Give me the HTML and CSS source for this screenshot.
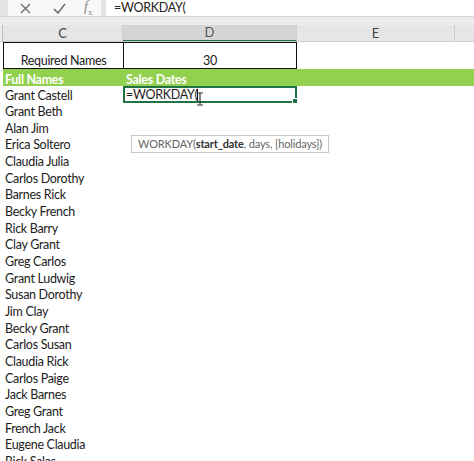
FILE: index.html
```html
<!DOCTYPE html>
<html lang="en">
<head>
  <meta charset="UTF-8" />
  <title>WORKDAY</title>
  <link rel="stylesheet" href="styles.css">
</head>
<body>
  <div class="formula-bar">
    <div class="fx-box">
      <svg class="cancel" width="11" height="11" viewBox="0 0 11 11">
        <path d="M1 1l9 9M10 1l-9 9" stroke="#6a6a6a" stroke-width="1.3" fill="none"/>
      </svg>
      <svg class="enter" width="13" height="11" viewBox="0 0 13 11">
        <path d="M1 6l4 4 7-9" stroke="#6a6a6a" stroke-width="1.5" fill="none"/>
      </svg>
      <span class="fx"><i>f</i><sub>x</sub></span>
    </div>
    <div class="formula-input">=WORKDAY(</div>
  </div>

  <div class="col-headers">
    <div class="edge"></div>
    <div class="hdr c">C</div>
    <div class="hdr d selected">D</div>
    <div class="hdr e">E</div>
    <div class="hdr f"></div>
  </div>

  <div class="sheet">
    <div class="row tall">
      <div class="cell c boxed">Required Names</div>
      <div class="cell d boxed">30</div>
    </div>
    <div class="row green">
      <div class="cell c">Full Names</div>
      <div class="cell d">Sales Dates</div>
    </div>
    <div class="row">
      <div class="cell c">Grant Castell</div>
      <div class="cell d active">=WORKDAY(<span class="caret"></span><span class="handle"></span></div>
    </div>
    <div id="names"></div>

    <div class="tooltip">WORKDAY(<b>start_date</b>, days, [holidays])</div>
    <svg class="ibeam" width="8" height="14" viewBox="0 0 8 14">
      <path d="M1 1h2.5l0.5 0.6 0.5-0.6H7M4 1.6v10.8M1 13h2.5l0.5-0.6 0.5 0.6H7" fill="none" stroke="#333" stroke-width="1.2"/>
    </svg>
  </div>

  <script>
    const names = [
      'Grant Beth', 'Alan Jim', 'Erica Soltero', 'Claudia Julia', 'Carlos Dorothy',
      'Barnes Rick', 'Becky French', 'Rick Barry', 'Clay Grant', 'Greg Carlos',
      'Grant Ludwig', 'Susan Dorothy', 'Jim Clay', 'Becky Grant', 'Carlos Susan',
      'Claudia Rick', 'Carlos Paige', 'Jack Barnes', 'Greg Grant', 'French Jack',
      'Eugene Claudia', 'Rick Salas'
    ];
    const list = document.getElementById('names');
    names.forEach(name => {
      const row = document.createElement('div');
      row.className = 'row';
      row.innerHTML = `<div class="cell c">${name}</div><div class="cell d"></div>`;
      list.appendChild(row);
    });
  </script>
</body>
</html>
```

FILE: styles.css
```css
body {
  margin: 0;
  font-family: Lato, 'Open Sans', sans-serif;
  background: #fff;
  overflow: hidden;
  height: 461px;
}

.formula-bar {
  display: flex;
  height: 16px;
  background: #e4e4e4;
  padding-left: 8px;
  gap: 5px;
  border-bottom: 1px solid #d6d6d6;
}

.fx-box {
  width: 93px;
  background: #f8f8f8;
  display: flex;
  align-items: center;
}

.cancel {
  margin-left: 12px;
}

.enter {
  margin-left: 22px;
}

.fx {
  margin-left: 18px;
  font-family: 'Liberation Serif', serif;
  font-size: 14px;
  line-height: 1;
  color: #888;
}

.fx sub {
  font-size: 9px;
}

.formula-input {
  flex: 1;
  background: #fff;
  font-size: 12.5px;
  letter-spacing: -0.3px;
  line-height: 16px;
  padding-left: 8px;
  color: #222;
}

.col-headers {
  display: flex;
  height: 16px;
  padding-top: 8px;
  background: #ececec;
  border-bottom: 1px solid #cfcfcf;
}

.edge {
  width: 3px;
  border-right: 1px solid #bdbdbd;
  box-sizing: border-box;
}

.hdr {
  background: #e6e6e6;
  font-size: 13px;
  line-height: 16px;
  text-align: center;
  color: #444;
  border-right: 1px solid #cdcdcd;
  box-sizing: border-box;
}

.hdr.c { width: 120px; }
.hdr.d { width: 174px; }
.hdr.e { width: 158px; }
.hdr.f { flex: 1; border-right: none; }

.hdr.selected {
  background: #d5d5d5;
  color: #555;
  border-bottom: 1px solid #217346;
  line-height: 15px;
}

.sheet {
  position: relative;
  padding-left: 3px;
}

.row {
  display: flex;
  height: 16.67px;
}

.cell {
  box-sizing: border-box;
  font-size: 12.5px;
  letter-spacing: -0.3px;
  line-height: 16.67px;
  padding-top: 1.5px;
  color: #1c1c1c;
  padding-left: 2px;
  white-space: nowrap;
}

.cell.c { width: 120px; }
.cell.d { width: 174px; }

.row.tall {
  height: 27px;
}

.cell.boxed {
  border: 1.5px solid #111;
  text-align: center;
  line-height: 36px;
  padding: 0;
}

.cell.c.boxed {
  border-right: none;
}

.row.green {
  background: #92d050;
  height: 17px;
}

.row.green .cell {
  color: #fff;
  font-weight: bold;
  line-height: 17px;
}

.row.green .cell.d {
  padding-left: 3px;
}

.cell.active {
  position: relative;
  border: 2px solid #217346;
  line-height: 13px;
  padding-top: 0;
  padding-left: 1px;
}

.caret {
  display: inline-block;
  width: 1px;
  height: 12px;
  background: #111;
  vertical-align: -2px;
}

.handle {
  position: absolute;
  right: -3px;
  bottom: -3px;
  width: 4px;
  height: 4px;
  background: #217346;
  border: 1px solid #fff;
}

.tooltip {
  position: absolute;
  left: 131px;
  top: 93px;
  height: 16px;
  padding: 0 6px;
  border: 1px solid #c6c6c6;
  background: #fff;
  font-size: 11px;
  letter-spacing: -0.15px;
  line-height: 16px;
  color: #666;
  white-space: nowrap;
}

.tooltip b {
  color: #333;
}

.ibeam {
  position: absolute;
  left: 196px;
  top: 50px;
}
```
